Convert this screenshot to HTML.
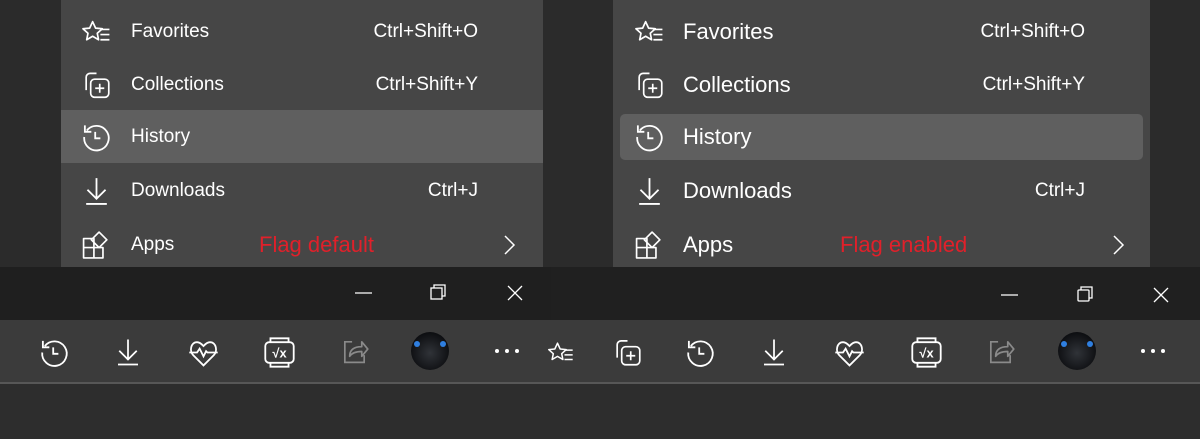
<!DOCTYPE html>
<html><head><meta charset="utf-8"><style>
*{margin:0;padding:0;box-sizing:border-box}
body{width:1200px;height:439px;background:#2b2b2b;position:relative;overflow:hidden;font-family:"Segoe UI","Liberation Sans",sans-serif;color:#fff}
.menu{position:absolute;top:0;height:267px;background:#464646}
.row{position:absolute;left:0;right:0;height:53px}
.row span{position:absolute;top:50%;transform:translateY(-50%);white-space:nowrap}
.ic{position:absolute;top:50%;transform:translateY(-50%)}
.bar{position:absolute;top:267px;height:53px;background:#1f1f1f}
.tb{position:absolute;top:320px;left:0;width:1200px;height:62px;background:#3b3b3b}
.ln{position:absolute;top:382px;left:0;width:1200px;height:2px;background:#575757}
.bot{position:absolute;top:384px;left:0;width:1200px;height:55px;background:#2d2d2d}
svg{overflow:visible}
.t{position:absolute}
.flag{color:#e0202a}
</style></head><body>
<svg width="0" height="0" style="position:absolute">
<defs>
<symbol id="star" viewBox="0 0 24 24" overflow="visible"><path d="M9 2l2.3 5 5.2.5-3.9 3.5 1 5-4.6-2.7L4.4 16l1-5L1.5 7.5 6.7 7z" fill="none" stroke="#fff" stroke-width="1.3" stroke-linejoin="round" transform="translate(0,2)"/><path d="M15 10h7M15 14h7M15 18h7" stroke="#fff" stroke-width="1.3"/></symbol>
<symbol id="coll" viewBox="0 0 24 24" overflow="visible"><path d="M4 16V6a3 3 0 0 1 3-3h5" fill="none" stroke="#fff" stroke-width="1.3"/><rect x="7.5" y="7.5" width="14" height="14" rx="3" fill="none" stroke="#fff" stroke-width="1.3"/><path d="M14.5 11v7M11 14.5h7" stroke="#fff" stroke-width="1.3"/></symbol>
<symbol id="hist" viewBox="0 0 24 24" overflow="visible"><path d="M4.5 7A9.5 9.5 0 1 1 2.5 12" fill="none" stroke="#fff" stroke-width="1.4"/><path d="M3 3v5h5" fill="none" stroke="#fff" stroke-width="1.4"/><path d="M11 8v5h4" fill="none" stroke="#fff" stroke-width="1.4"/></symbol>
<symbol id="dl" viewBox="0 0 24 24" overflow="visible"><path d="M12 2v16M5 11l7 7 7-7M4 22h16" fill="none" stroke="#fff" stroke-width="1.4"/></symbol>
<symbol id="apps" viewBox="0 0 24 24" overflow="visible"><path d="M2 7h8v15H2zM2 14h15v8H10M14 2l6 6-6 6-6-6z" fill="none" stroke="#fff" stroke-width="1.3" stroke-linejoin="round"/></symbol>
<symbol id="heart" viewBox="0 0 24 24" overflow="visible"><path d="M4 14l8 8 8-8c3-3 2-10-3-10-2.5 0-4 2-5 3-1-1-2.5-3-5-3-5 0-6 7-3 10" fill="none" stroke="#fff" stroke-width="1.4"/><path d="M1 12h6l2-3 3 6 2-4 1 1h8" fill="none" stroke="#fff" stroke-width="1.4"/></symbol>
<symbol id="math" viewBox="0 0 24 24" overflow="visible"><rect x="1" y="4" width="22" height="16" rx="3" fill="none" stroke="#fff" stroke-width="1.4"/><path d="M5 4V1h14v3M5 20v3h14v-3" fill="none" stroke="#fff" stroke-width="1.4"/><text x="12" y="16" font-size="10" text-anchor="middle" fill="#fff" font-family="Liberation Sans" font-weight="bold">√x</text></symbol>
<symbol id="share" viewBox="0 0 24 24" overflow="visible"><path d="M10 4H4v17h16v-6" fill="none" stroke="#8a8a8a" stroke-width="1.4"/><path d="M8 16c0-6 4-8 10-8V4l5 6-5 6v-4c-5 0-8 1-10 4z" fill="none" stroke="#8a8a8a" stroke-width="1.4" stroke-linejoin="round"/></symbol>
<radialGradient id="ag" cx="50%" cy="55%" r="55%"><stop offset="0" stop-color="#303338"/><stop offset="1" stop-color="#0c0d10"/></radialGradient>
<symbol id="av" viewBox="0 0 40 40"><circle cx="20" cy="20" r="19" fill="url(#ag)"/><circle cx="7" cy="13" r="3" fill="#2f7fe0"/><circle cx="33" cy="13" r="3" fill="#2f7fe0"/></symbol>
</defs></svg>

<!-- LEFT MENU -->
<div class="menu" style="left:61px;width:482px;font-size:19px">
 <div class="row" style="top:5px"><svg class="ic" style="left:20px" width="31" height="31"><use href="#star" width="31" height="31"/></svg><span style="left:70px">Favorites</span><span style="right:65px">Ctrl+Shift+O</span></div>
 <div class="row" style="top:58px"><svg class="ic" style="left:20px" width="31" height="31"><use href="#coll" width="31" height="31"/></svg><span style="left:70px">Collections</span><span style="right:65px">Ctrl+Shift+Y</span></div>
 <div class="row" style="top:110px;background:#5f5f5f"><svg class="ic" style="left:20px" width="31" height="31"><use href="#hist" width="31" height="31"/></svg><span style="left:70px">History</span></div>
 <div class="row" style="top:164px"><svg class="ic" style="left:20px" width="31" height="31"><use href="#dl" width="31" height="31"/></svg><span style="left:70px">Downloads</span><span style="right:65px">Ctrl+J</span></div>
 <div class="row" style="top:218px"><svg class="ic" style="left:20px" width="31" height="31"><use href="#apps" width="31" height="31"/></svg><span style="left:70px">Apps</span><span class="flag" style="left:198px;font-size:22px">Flag default</span><svg class="ic" style="left:442px" width="12" height="20"><path d="M2 1l9 9-9 9" fill="none" stroke="#fff" stroke-width="1.5"/></svg></div>
</div>
<!-- RIGHT MENU -->
<div class="menu" style="left:613px;width:537px;font-size:22px">
 <div class="row" style="top:5px"><svg class="ic" style="left:21px" width="31" height="31"><use href="#star" width="31" height="31"/></svg><span style="left:70px">Favorites</span><span style="right:65px;font-size:19px">Ctrl+Shift+O</span></div>
 <div class="row" style="top:58px"><svg class="ic" style="left:21px" width="31" height="31"><use href="#coll" width="31" height="31"/></svg><span style="left:70px">Collections</span><span style="right:65px;font-size:19px">Ctrl+Shift+Y</span></div>
 <div style="position:absolute;left:7px;width:523px;top:114px;height:46px;background:#5f5f5f;border-radius:5px"></div>
 <div class="row" style="top:110px"><svg class="ic" style="left:21px" width="31" height="31"><use href="#hist" width="31" height="31"/></svg><span style="left:70px">History</span></div>
 <div class="row" style="top:164px"><svg class="ic" style="left:21px" width="31" height="31"><use href="#dl" width="31" height="31"/></svg><span style="left:70px">Downloads</span><span style="right:65px;font-size:19px">Ctrl+J</span></div>
 <div class="row" style="top:218px"><svg class="ic" style="left:21px" width="31" height="31"><use href="#apps" width="31" height="31"/></svg><span style="left:70px">Apps</span><span class="flag" style="left:227px">Flag enabled</span><svg class="ic" style="left:499px" width="12" height="20"><path d="M2 1l9 9-9 9" fill="none" stroke="#fff" stroke-width="1.5"/></svg></div>
</div>

<div class="bar" style="left:0;width:551px"></div>
<div class="bar" style="left:551px;width:649px;background:#202020"></div>
<svg class="t" style="left:0;top:267px" width="1200" height="53" fill="none" stroke="#fff" stroke-width="1.3">
<path d="M355 26h17"/><rect x="431" y="21" width="11" height="11"/><path d="M434 21v-3h11v11h-3"/><path d="M508 19l14 14M522 19l-14 14"/>
<path d="M1001 28h17"/><rect x="1078" y="23" width="11" height="11" rx="1"/><path d="M1081 23v-3h11v11h-3"/><path d="M1154 21l14 14M1168 21l-14 14"/>
</svg>

<div class="tb"></div><div class="ln"></div><div class="bot"></div>
<svg class="t" style="left:39px;top:337px" width="31" height="31"><use href="#hist" width="31" height="31"/></svg>
<svg class="t" style="left:113px;top:337px" width="30" height="30"><use href="#dl" width="30" height="30"/></svg>
<svg class="t" style="left:188px;top:337px" width="31" height="31"><use href="#heart" width="31" height="31"/></svg>
<svg class="t" style="left:264px;top:337px" width="31" height="31"><use href="#math" width="31" height="31"/></svg>
<svg class="t" style="left:340px;top:337px" width="29" height="29"><use href="#share" width="29" height="29"/></svg>
<svg class="t" style="left:410px;top:331px" width="40" height="40"><use href="#av" width="40" height="40"/></svg>
<svg class="t" style="left:494px;top:345px" width="26" height="12"><circle cx="3" cy="6" r="2" fill="#fff"/><circle cx="13" cy="6" r="2" fill="#fff"/><circle cx="23" cy="6" r="2" fill="#fff"/></svg>
<svg class="t" style="left:547px;top:337px" width="28" height="31"><use href="#star" width="28" height="31"/></svg>

<svg class="t" style="left:612px;top:337px" width="31" height="31"><use href="#coll" width="31" height="31"/></svg>
<svg class="t" style="left:685px;top:337px" width="31" height="31"><use href="#hist" width="31" height="31"/></svg>
<svg class="t" style="left:759px;top:337px" width="30" height="30"><use href="#dl" width="30" height="30"/></svg>
<svg class="t" style="left:834px;top:337px" width="31" height="31"><use href="#heart" width="31" height="31"/></svg>
<svg class="t" style="left:911px;top:337px" width="31" height="31"><use href="#math" width="31" height="31"/></svg>
<svg class="t" style="left:986px;top:337px" width="29" height="29"><use href="#share" width="29" height="29"/></svg>
<svg class="t" style="left:1057px;top:331px" width="40" height="40"><use href="#av" width="40" height="40"/></svg>
<svg class="t" style="left:1140px;top:345px" width="26" height="12"><circle cx="3" cy="6" r="2" fill="#fff"/><circle cx="13" cy="6" r="2" fill="#fff"/><circle cx="23" cy="6" r="2" fill="#fff"/></svg>
</body></html>
